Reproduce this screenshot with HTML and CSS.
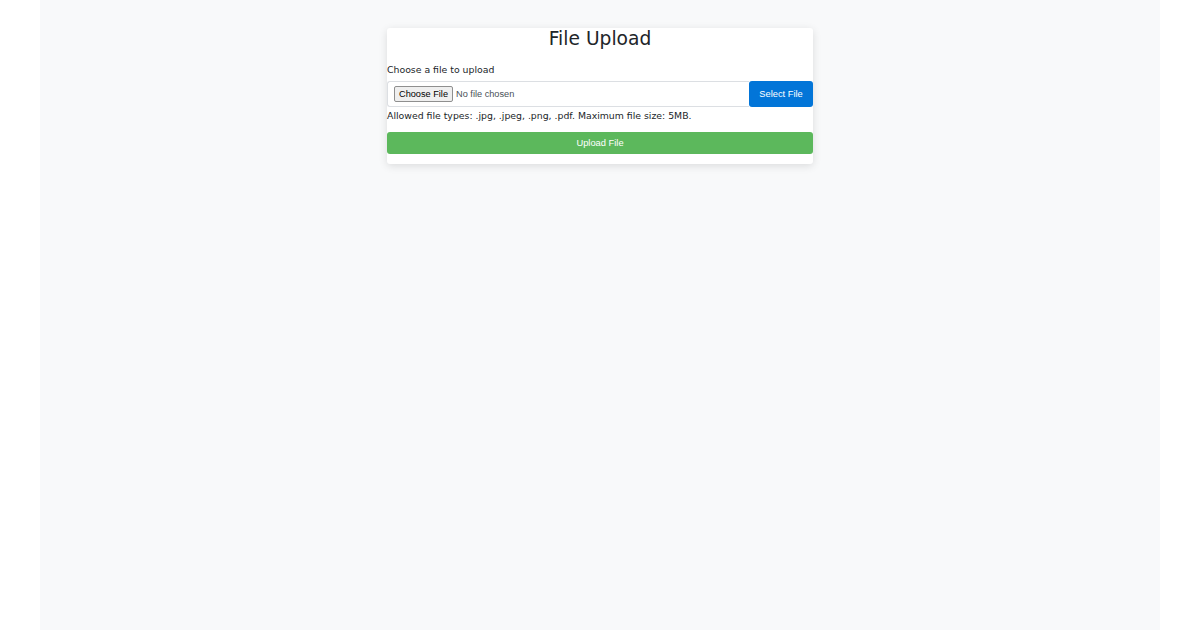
FILE: index.html
```html
<!DOCTYPE html>
<html>
<head>
<meta charset="utf-8">
<title>File Upload</title>
<link rel="stylesheet" href="styles.css">
</head>
<body>
<div class="page">
  <div class="card">
    <h1 class="title">File Upload</h1>
    <form class="form">
      <label class="label" for="file">Choose a file to upload</label>
      <div class="input-group">
        <input class="file-input" id="file" type="file">
        <button type="button" class="btn btn-blue">Select File</button>
      </div>
      <p class="help">Allowed file types: .jpg, .jpeg, .png, .pdf. Maximum file size: 5MB.</p>
      <button type="button" class="btn btn-green">Upload File</button>
    </form>
  </div>
</div>
</body>
</html>
```
FILE: styles.css
```css
html, body {
  margin: 0;
  padding: 0;
  background: #ffffff;
}
body {
  font-family: "DejaVu Sans", sans-serif;
  color: #212529;
}
.page {
  margin: 0 40px;
  min-height: 630px;
  background: #f8f9fa;
  padding-top: 28px;
  box-sizing: border-box;
}
.card {
  width: 426px;
  margin: 0 auto;
  background: #ffffff;
  border-radius: 3px;
  box-shadow: 0 2px 8px rgba(0, 0, 0, 0.12);
  padding-bottom: 10px;
}
.title {
  margin: 0;
  font-size: 18.67px;
  font-weight: 400;
  line-height: 22px;
  text-align: center;
}
.form {
  display: flex;
  flex-direction: column;
  margin-top: 13px;
}
.label {
  font-size: 9.33px;
  line-height: 14px;
}
.input-group {
  display: flex;
  margin-top: 4px;
  height: 26px;
}
.file-input {
  flex: 1;
  min-width: 0;
  box-sizing: border-box;
  margin: 0;
  padding: 4px 6px;
  border: 1px solid #dcdfe3;
  border-right: none;
  border-radius: 3px 0 0 3px;
  font-family: "Liberation Sans", Arial, sans-serif;
  font-size: 9.2px;
  color: #495057;
  background: #fff;
}
.file-input::file-selector-button {
  font-family: "Liberation Sans", Arial, sans-serif;
  font-size: 9.2px;
  padding: 1px 4px;
  margin: 0 3px 0 0;
  border: 1px solid #8f8f8f;
  border-radius: 2px;
  background: #efefef;
  color: #000;
  height: 16px;
}
.btn {
  font-family: "Liberation Sans", Arial, sans-serif;
  font-size: 9.33px;
  color: #ffffff;
  border: none;
  border-radius: 3px;
  cursor: pointer;
  margin: 0;
}
.btn-blue {
  background: #0275d8;
  padding: 0 10px;
  height: 26px;
  width: 64px;
}
.help {
  margin: 2px 0 0;
  font-size: 9.33px;
  line-height: 14px;
}
.btn-green {
  margin-top: 9px;
  background: #5cb85c;
  height: 22px;
  width: 100%;
}
```
